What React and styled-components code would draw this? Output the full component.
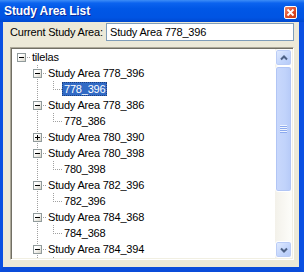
import React from 'react';
import styled, { createGlobalStyle } from 'styled-components';

const GlobalStyle = createGlobalStyle`
  html, body { margin:0; padding:0; background:#fff; }
  body { font-family:"Liberation Sans", Arial, sans-serif; }
`

const dots = '#A0A0A0'

const Window = styled.div`
  width:304px;
  height:272px;
  display:flex;
  flex-direction:column;
  overflow:hidden;
  background:#0055E5;
`
const TitleBar = styled.div`
  height:22px;
  flex:none;
  display:flex;
  align-items:center;
  justify-content:space-between;
  padding:0 7px 0 4px;
  background:linear-gradient(to bottom, #3D8DF7 0%, #0B63EF 14%, #0057E6 40%, #0054E3 80%, #0049D0 100%);
`
const Title = styled.span`
  color:#fff;
  font-weight:bold;
  font-size:12px;
  letter-spacing:-0.1px;
  text-shadow:1px 1px #0A2A9A;
`
const CloseButton = styled.div`
  width:13px;
  height:13px;
  margin-top:2px;
  box-sizing:border-box;
  border:1px solid #fff;
  border-radius:2px;
  background:linear-gradient(135deg, #F08A6C 0%, #E0502E 50%, #C7380F 100%);
  display:flex;
  align-items:center;
  justify-content:center;
`
const Frame = styled.div`
  flex:1;
  min-height:0;
  display:flex;
  flex-direction:column;
  gap:6px;
  padding:1px 5px 7px 7px;
  background:#ECE9D8;
  border-left:3px solid #0A50E2;
  border-right:5px solid #0A50E2;
  border-bottom:5px solid #0A4CDA;
`
const FieldRow = styled.div`
  height:18px;
  flex:none;
  display:flex;
  align-items:center;
  font-size:11px;
  letter-spacing:-0.2px;
  color:#000;
`
const Field = styled.div`
  width:188px;
  height:18px;
  margin-left:auto;
  box-sizing:border-box;
  border:1px solid #7F9DB9;
  background:#fff;
  padding:0 3px;
  line-height:16px;
`
const TreeBox = styled.div`
  flex:1;
  min-height:0;
  display:flex;
  background:#fff;
  border:1px solid;
  border-color:#ACA899 #fff #fff #ACA899;
  box-shadow:inset 1px 1px #716F64, inset -1px -1px #F1EFE2;
  padding:1px;
`
const TreeList = styled.div`
  flex:1;
  overflow:hidden;
  padding-left:1px;
  font-size:11px;
  letter-spacing:-0.2px;
`
const Row = styled.div`
  height:16px;
  display:flex;
  align-items:center;
`
const Cell = styled.div`
  width:16px;
  height:16px;
  flex:none;
  position:relative;
  &::before {
    content:'';
    display:${({ $v }) => ($v ? 'block' : 'none')};
    position:absolute;
    left:8px;
    top:0;
    width:1px;
    height:${({ $v }) => ($v === 'top' ? '9px' : '16px')};
    background:repeating-linear-gradient(to bottom, ${dots} 0 1px, transparent 1px 2px);
  }
  &::after {
    content:'';
    display:${({ $h }) => ($h ? 'block' : 'none')};
    position:absolute;
    left:8px;
    top:8px;
    width:9px;
    height:1px;
    background:repeating-linear-gradient(to right, ${dots} 0 1px, transparent 1px 2px);
  }
`
const Expander = styled.span`
  position:absolute;
  left:4px;
  top:4px;
  width:9px;
  height:9px;
  box-sizing:border-box;
  border:1px solid #919B9C;
  background:linear-gradient(135deg, #fff 30%, #D8D5C8 100%);
  z-index:1;
  &::before {
    content:'';
    position:absolute;
    left:1px;
    top:3px;
    width:5px;
    height:1px;
    background:#000;
  }
  &::after {
    content:'';
    display:${({ $open }) => ($open ? 'none' : 'block')};
    position:absolute;
    left:3px;
    top:1px;
    width:1px;
    height:5px;
    background:#000;
  }
`
const Label = styled.span`
  margin-left:1px;
  padding:0 2px;
  height:14px;
  line-height:14px;
  white-space:nowrap;
  color:${({ $selected }) => ($selected ? '#fff' : '#000')};
  background:${({ $selected }) => ($selected ? '#316AC5' : 'transparent')};
  outline:${({ $selected }) => ($selected ? '1px dotted #1B3F80' : 'none')};
  outline-offset:-1px;
`
const ScrollBar = styled.div`
  width:17px;
  flex:none;
  display:flex;
  flex-direction:column;
  background:linear-gradient(to right, #F3F1EA, #FDFDFA);
`
const ScrollButton = styled.div`
  height:17px;
  flex:none;
  box-sizing:border-box;
  border:1px solid #fff;
  border-radius:3px;
  box-shadow:inset 0 0 0 1px #BACCF6;
  background:linear-gradient(135deg, #E3ECFE 0%, #C4D6FC 55%, #B3C9F8 100%);
  display:flex;
  align-items:center;
  justify-content:center;
`
const Track = styled.div`
  flex:1;
  display:flex;
  flex-direction:column;
`
const Thumb = styled.div`
  height:126px;
  box-sizing:border-box;
  border:1px solid #fff;
  border-radius:3px;
  box-shadow:inset 0 0 0 1px #B1C5F5;
  background:linear-gradient(to right, #C9D8FC 0%, #C1D3FB 60%, #B6CAF8 100%);
  display:flex;
  flex-direction:column;
  align-items:center;
  justify-content:center;
  gap:1px;
`
const Grip = styled.span`
  width:7px;
  height:1px;
  background:#8CA9EE;
  box-shadow:0 -1px #EEF4FE;
`

// last row is the first child of 784_394: only its lines show above the edge
const rows = [
  { cells: [{ h: true, box: 'open' }], text: 'tilelas' },
  { cells: [{}, { v: 'full', h: true, box: 'open' }], text: 'Study Area 778_396' },
  { cells: [{}, { v: 'full' }, { v: 'top', h: true }], text: '778_396', selected: true },
  { cells: [{}, { v: 'full', h: true, box: 'open' }], text: 'Study Area 778_386' },
  { cells: [{}, { v: 'full' }, { v: 'top', h: true }], text: '778_386' },
  { cells: [{}, { v: 'full', h: true, box: 'closed' }], text: 'Study Area 780_390' },
  { cells: [{}, { v: 'full', h: true, box: 'open' }], text: 'Study Area 780_398' },
  { cells: [{}, { v: 'full' }, { v: 'top', h: true }], text: '780_398' },
  { cells: [{}, { v: 'full', h: true, box: 'open' }], text: 'Study Area 782_396' },
  { cells: [{}, { v: 'full' }, { v: 'top', h: true }], text: '782_396' },
  { cells: [{}, { v: 'full', h: true, box: 'open' }], text: 'Study Area 784_368' },
  { cells: [{}, { v: 'full' }, { v: 'top', h: true }], text: '784_368' },
  { cells: [{}, { v: 'full', h: true, box: 'open' }], text: 'Study Area 784_394' },
  { cells: [{}, { v: 'full' }, { v: 'top', h: true }], text: '' },
]

const Chevron = ({ down }) => (
  <svg width="8" height="6" viewBox="0 0 8 6">
    <polyline
      points={down ? '1,1.5 4,4.5 7,1.5' : '1,4.5 4,1.5 7,4.5'}
      fill="none"
      stroke="#4D6185"
      strokeWidth="2"
    />
  </svg>
)

export default function App() {
  return (
    <>
      <GlobalStyle />
      <Window>
        <TitleBar>
          <Title>Study Area List</Title>
          <CloseButton>
            <svg width="9" height="9" viewBox="0 0 9 9">
              <path d="M1.5 1.5 L7.5 7.5 M7.5 1.5 L1.5 7.5" stroke="#fff" strokeWidth="1.8" />
            </svg>
          </CloseButton>
        </TitleBar>
        <Frame>
          <FieldRow>
            <span>Current Study Area:</span>
            <Field>Study Area 778_396</Field>
          </FieldRow>
          <TreeBox>
            <TreeList>
              {rows.map((row, i) => (
                <Row key={i}>
                  {row.cells.map((c, j) => (
                    <Cell key={j} $v={c.v} $h={c.h}>
                      {c.box && <Expander $open={c.box === 'open'} />}
                    </Cell>
                  ))}
                  {row.text && <Label $selected={row.selected}>{row.text}</Label>}
                </Row>
              ))}
            </TreeList>
            <ScrollBar>
              <ScrollButton><Chevron /></ScrollButton>
              <Track>
                <Thumb>
                  <Grip /><Grip /><Grip /><Grip />
                </Thumb>
              </Track>
              <ScrollButton><Chevron down /></ScrollButton>
            </ScrollBar>
          </TreeBox>
        </Frame>
      </Window>
    </>
  )
}
